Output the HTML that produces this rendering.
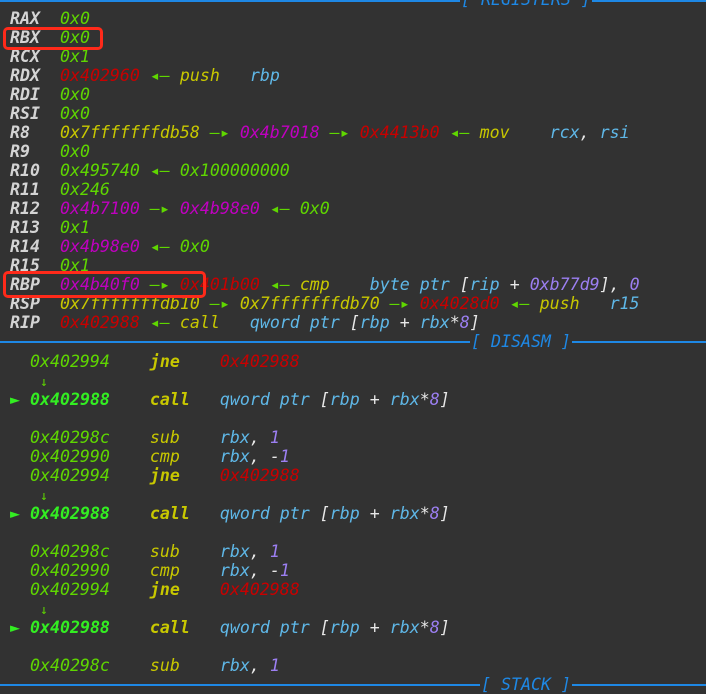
<!DOCTYPE html>
<html><head><meta charset="utf-8"><style>
html,body{margin:0;padding:0;}
body{width:706px;height:692px;background:#323232;position:relative;overflow:hidden;
font-family:"DejaVu Sans Mono","Liberation Mono",monospace;font-style:oblique;font-size:16.6px;}
pre{margin:0;position:absolute;left:0;font:inherit;line-height:19px;white-space:pre;color:#d0d0d0;}
.r{color:#d4d4d4;font-weight:bold}
.g{color:#5fd700}
.G{color:#33ee22;font-weight:bold}
.red{color:#c80000}
.m{color:#c000c0}
.y{color:#c8c800}
.Y{color:#c8c800;font-weight:bold}
.b{color:#5fb8e8}
.p{color:#9c7ff2}
.w{color:#e8e8e8}
.a{color:#5fd700;font-size:13px;line-height:1px}
.hl{position:absolute;left:0;width:706px;height:2px;background:#1e88e5}
.ht{position:absolute;color:#1e88e5;background:#323232;line-height:19px;padding:0 1px;}
.box{position:absolute;border:3px solid #ff2a1a;border-radius:5px;}
</style></head><body>
<div class="hl" style="top:0"></div>
<div class="ht" style="left:460px;top:-10px">[ REGISTERS ]</div>
<div class="hl" style="top:341px"></div>
<div class="ht" style="left:470px;top:332px">[ DISASM ]</div>
<div class="hl" style="top:684px"></div>
<div class="ht" style="left:480px;top:675px">[ STACK ]</div>
<pre style="top:9px;left:10px"><span class="r">RAX</span>  <span class="g">0x0</span>
<span class="r">RBX</span>  <span class="g">0x0</span>
<span class="r">RCX</span>  <span class="g">0x1</span>
<span class="r">RDX</span>  <span class="red">0x402960</span> <span class="g">◂—</span> <span class="y">push</span>   <span class="b">rbp</span>
<span class="r">RDI</span>  <span class="g">0x0</span>
<span class="r">RSI</span>  <span class="g">0x0</span>
<span class="r">R8 </span>  <span class="y">0x7fffffffdb58</span> <span class="g">—▸</span> <span class="m">0x4b7018</span> <span class="g">—▸</span> <span class="red">0x4413b0</span> <span class="g">◂—</span> <span class="y">mov</span>    <span class="b">rcx</span><span class="w">,</span> <span class="b">rsi</span>
<span class="r">R9 </span>  <span class="g">0x0</span>
<span class="r">R10</span>  <span class="g">0x495740</span> <span class="g">◂—</span> <span class="g">0x100000000</span>
<span class="r">R11</span>  <span class="g">0x246</span>
<span class="r">R12</span>  <span class="m">0x4b7100</span> <span class="g">—▸</span> <span class="m">0x4b98e0</span> <span class="g">◂—</span> <span class="g">0x0</span>
<span class="r">R13</span>  <span class="g">0x1</span>
<span class="r">R14</span>  <span class="m">0x4b98e0</span> <span class="g">◂—</span> <span class="g">0x0</span>
<span class="r">R15</span>  <span class="g">0x1</span>
<span class="r">RBP</span>  <span class="m">0x4b40f0</span> <span class="g">—▸</span> <span class="red">0x401b00</span> <span class="g">◂—</span> <span class="y">cmp</span>    <span class="b">byte ptr</span> <span class="w">[</span><span class="b">rip</span> <span class="w">+</span> <span class="p">0xb77d9</span><span class="w">],</span> <span class="p">0</span>
<span class="r">RSP</span>  <span class="y">0x7fffffffdb10</span> <span class="g">—▸</span> <span class="y">0x7fffffffdb70</span> <span class="g">—▸</span> <span class="red">0x4028d0</span> <span class="g">◂—</span> <span class="y">push</span>   <span class="b">r15</span>
<span class="r">RIP</span>  <span class="red">0x402988</span> <span class="g">◂—</span> <span class="y">call</span>   <span class="b">qword ptr</span> <span class="w">[</span><span class="b">rbp</span> <span class="w">+</span> <span class="b">rbx</span><span class="w">*</span><span class="p">8</span><span class="w">]</span></pre>
<pre style="top:351.5px;left:10px">  <span class="g">0x402994</span>    <span class="Y">jne</span>    <span class="red">0x402988</span>
   <span class="a">↓</span>
<span class="G">►</span> <span class="G">0x402988</span>    <span class="Y">call</span>   <span class="b">qword ptr</span> <span class="w">[</span><span class="b">rbp</span> <span class="w">+</span> <span class="b">rbx</span><span class="w">*</span><span class="p">8</span><span class="w">]</span>
 
  <span class="g">0x40298c</span>    <span class="y">sub</span>    <span class="b">rbx</span><span class="w">,</span> <span class="p">1</span>
  <span class="g">0x402990</span>    <span class="y">cmp</span>    <span class="b">rbx</span><span class="w">,</span> <span class="w">-</span><span class="p">1</span>
  <span class="g">0x402994</span>    <span class="Y">jne</span>    <span class="red">0x402988</span>
   <span class="a">↓</span>
<span class="G">►</span> <span class="G">0x402988</span>    <span class="Y">call</span>   <span class="b">qword ptr</span> <span class="w">[</span><span class="b">rbp</span> <span class="w">+</span> <span class="b">rbx</span><span class="w">*</span><span class="p">8</span><span class="w">]</span>
 
  <span class="g">0x40298c</span>    <span class="y">sub</span>    <span class="b">rbx</span><span class="w">,</span> <span class="p">1</span>
  <span class="g">0x402990</span>    <span class="y">cmp</span>    <span class="b">rbx</span><span class="w">,</span> <span class="w">-</span><span class="p">1</span>
  <span class="g">0x402994</span>    <span class="Y">jne</span>    <span class="red">0x402988</span>
   <span class="a">↓</span>
<span class="G">►</span> <span class="G">0x402988</span>    <span class="Y">call</span>   <span class="b">qword ptr</span> <span class="w">[</span><span class="b">rbp</span> <span class="w">+</span> <span class="b">rbx</span><span class="w">*</span><span class="p">8</span><span class="w">]</span>
 
  <span class="g">0x40298c</span>    <span class="y">sub</span>    <span class="b">rbx</span><span class="w">,</span> <span class="p">1</span></pre>
<div class="box" style="left:3px;top:27px;width:94px;height:17px"></div>
<div class="box" style="left:3px;top:271px;width:197px;height:21px"></div>
</body></html>
